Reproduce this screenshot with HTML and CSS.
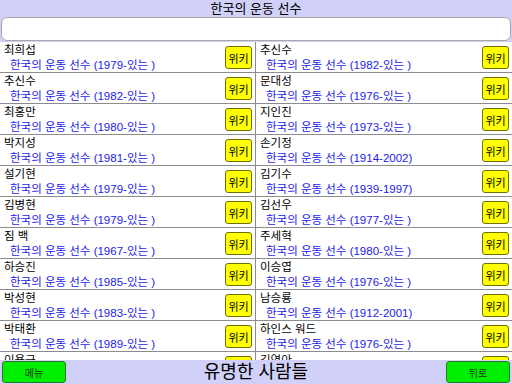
FILE: index.html
```html
<!DOCTYPE html>
<html lang="ko">
  <head>
    <meta charset="UTF-8" />
    <title>한국의 운동 선수</title>
    <link rel="stylesheet" href="styles.css">
  </head>
  <body>
    <header class="top-bar">한국의 운동 선수</header>
    <div class="search-wrap"><input class="search" type="text" /></div>
    <section class="list">
      <div class="cell"><div class="info"><div class="name">최희섭</div><div class="desc">한국의 운동 선수 (1979-있는 )</div></div><button class="wiki">위키</button></div>
      <div class="cell"><div class="info"><div class="name">추신수</div><div class="desc">한국의 운동 선수 (1982-있는 )</div></div><button class="wiki">위키</button></div>
      <div class="cell"><div class="info"><div class="name">추신수</div><div class="desc">한국의 운동 선수 (1982-있는 )</div></div><button class="wiki">위키</button></div>
      <div class="cell"><div class="info"><div class="name">문대성</div><div class="desc">한국의 운동 선수 (1976-있는 )</div></div><button class="wiki">위키</button></div>
      <div class="cell"><div class="info"><div class="name">최홍만</div><div class="desc">한국의 운동 선수 (1980-있는 )</div></div><button class="wiki">위키</button></div>
      <div class="cell"><div class="info"><div class="name">지인진</div><div class="desc">한국의 운동 선수 (1973-있는 )</div></div><button class="wiki">위키</button></div>
      <div class="cell"><div class="info"><div class="name">박지성</div><div class="desc">한국의 운동 선수 (1981-있는 )</div></div><button class="wiki">위키</button></div>
      <div class="cell"><div class="info"><div class="name">손기정</div><div class="desc">한국의 운동 선수 (1914-2002)</div></div><button class="wiki">위키</button></div>
      <div class="cell"><div class="info"><div class="name">설기현</div><div class="desc">한국의 운동 선수 (1979-있는 )</div></div><button class="wiki">위키</button></div>
      <div class="cell"><div class="info"><div class="name">김기수</div><div class="desc">한국의 운동 선수 (1939-1997)</div></div><button class="wiki">위키</button></div>
      <div class="cell"><div class="info"><div class="name">김병현</div><div class="desc">한국의 운동 선수 (1979-있는 )</div></div><button class="wiki">위키</button></div>
      <div class="cell"><div class="info"><div class="name">김선우</div><div class="desc">한국의 운동 선수 (1977-있는 )</div></div><button class="wiki">위키</button></div>
      <div class="cell"><div class="info"><div class="name">짐 백</div><div class="desc">한국의 운동 선수 (1967-있는 )</div></div><button class="wiki">위키</button></div>
      <div class="cell"><div class="info"><div class="name">주세혁</div><div class="desc">한국의 운동 선수 (1980-있는 )</div></div><button class="wiki">위키</button></div>
      <div class="cell"><div class="info"><div class="name">하승진</div><div class="desc">한국의 운동 선수 (1985-있는 )</div></div><button class="wiki">위키</button></div>
      <div class="cell"><div class="info"><div class="name">이승엽</div><div class="desc">한국의 운동 선수 (1976-있는 )</div></div><button class="wiki">위키</button></div>
      <div class="cell"><div class="info"><div class="name">박성현</div><div class="desc">한국의 운동 선수 (1983-있는 )</div></div><button class="wiki">위키</button></div>
      <div class="cell"><div class="info"><div class="name">남승룡</div><div class="desc">한국의 운동 선수 (1912-2001)</div></div><button class="wiki">위키</button></div>
      <div class="cell"><div class="info"><div class="name">박태환</div><div class="desc">한국의 운동 선수 (1989-있는 )</div></div><button class="wiki">위키</button></div>
      <div class="cell"><div class="info"><div class="name">하인스 워드</div><div class="desc">한국의 운동 선수 (1976-있는 )</div></div><button class="wiki">위키</button></div>
      <div class="cell"><div class="info"><div class="name">이용규</div><div class="desc">한국의 운동 선수 (1985-있는 )</div></div><button class="wiki">위키</button></div>
      <div class="cell"><div class="info"><div class="name">김연아</div><div class="desc">한국의 운동 선수 (1990-있는 )</div></div><button class="wiki">위키</button></div>
    </section>
    <footer class="bottom-bar">
      <button class="nav-btn">메뉴</button>
      <div class="footer-title">유명한 사람들</div>
      <button class="nav-btn">뒤로</button>
    </footer>
  </body>
</html>
```

FILE: styles.css
```css
* {
  margin: 0;
  padding: 0;
  box-sizing: border-box;
}

body {
  width: 512px;
  height: 384px;
  overflow: hidden;
  display: flex;
  flex-direction: column;
  font-family: "Liberation Sans", "Noto Sans CJK KR", sans-serif;
  background-color: #ffffff;
  color: #000000;
}

.top-bar {
  height: 17px;
  background-color: #d0d0f8;
  text-align: center;
  font-size: 13px;
  line-height: 17px;
}

.search-wrap {
  height: 25px;
  padding: 0 1px 1px 1px;
  background-color: #d0d0f8;
}

.search {
  display: block;
  width: 100%;
  height: 24px;
  border: 1px solid #a8a8a8;
  border-radius: 6px;
  background-color: #ffffff;
}

.list {
  flex: 1;
  overflow: hidden;
  display: grid;
  grid-template-columns: 256px 256px;
  grid-auto-rows: 31px;
  align-content: start;
}

.cell {
  display: flex;
  justify-content: space-between;
  align-items: flex-start;
  border-bottom: 1px solid #8c8c8c;
  padding: 0 3px 0 4px;
}

.cell:nth-child(odd) {
  border-right: 1px solid #8c8c8c;
}

.info {
  padding-top: 1px;
}

.name {
  font-size: 11.5px;
  line-height: 15px;
}

.desc {
  font-size: 11.5px;
  line-height: 15px;
  color: #1a1aee;
  padding-left: 6px;
}

.wiki {
  margin-top: 4px;
  width: 27px;
  height: 23px;
  background-color: #ffff00;
  border: 1px solid #707000;
  border-radius: 3px;
  font-family: "Liberation Sans", "Noto Sans CJK KR", sans-serif;
  font-size: 11px;
  color: #000000;
}

.bottom-bar {
  height: 24px;
  background-color: #d0d0f8;
  display: flex;
  align-items: center;
  justify-content: space-between;
  padding: 0 2px 0 2px;
}

.nav-btn {
  width: 64px;
  height: 22px;
  background-color: #00ee00;
  border: 1px solid #2a7a2a;
  border-radius: 3px;
  font-family: "Liberation Sans", "Noto Sans CJK KR", sans-serif;
  font-size: 10px;
  color: #1a3a1a;
}

.footer-title {
  font-size: 18px;
  line-height: 24px;
}
```
